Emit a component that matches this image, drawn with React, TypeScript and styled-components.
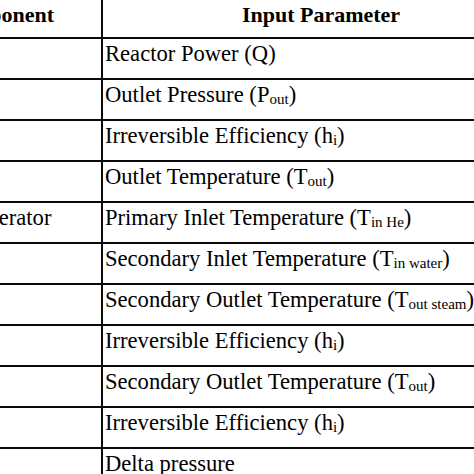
import styled, { createGlobalStyle } from 'styled-components';

const GlobalStyle = createGlobalStyle`
  html, body {
    margin: 0;
    padding: 0;
    background: #ffffff;
    overflow: hidden;
  }
  body {
    width: 474px;
    height: 474px;
    font-family: 'Liberation Serif', 'Times New Roman', serif;
    color: #000000;
  }
`;

const Table = styled.table`
  margin: -4px 0 0 -105px;
  border-collapse: separate;
  border-spacing: 0;
  border-top: 2px solid #0a0a0a;
  border-left: 2px solid #0a0a0a;
  table-layout: fixed;
  width: 646px;
  font-size: 22.6px;
  line-height: 25px;
`;

const HeadCell = styled.th<{ $wide?: boolean }>`
  box-sizing: border-box;
  width: ${({ $wide }) => ($wide ? '438px' : '206px')};
  height: 41px;
  padding: 4px 2px 0;
  vertical-align: top;
  text-align: center;
  font-size: 22px;
  font-weight: bold;
  border-right: 2px solid #0a0a0a;
  border-bottom: 2px solid #0a0a0a;
  white-space: nowrap;
`;

const Cell = styled.td`
  box-sizing: border-box;
  height: 41px;
  padding: 2px 2px 0;
  vertical-align: top;
  text-align: left;
  border-right: 2px solid #0a0a0a;
  border-bottom: 2px solid #0a0a0a;
  white-space: nowrap;
  overflow: hidden;
`;

const Sub = styled.sub`
  font-size: 15px;
  line-height: 0;
  vertical-align: -2px;
`;

type Row = {
  component?: string;
  label: string;
  symbol?: string;
  sub?: string;
};

const rows: Row[] = [
  { label: 'Reactor Power', symbol: 'Q' },
  { label: 'Outlet Pressure', symbol: 'P', sub: 'out' },
  { label: 'Irreversible Efficiency', symbol: 'h', sub: 'i' },
  { label: 'Outlet Temperature', symbol: 'T', sub: 'out' },
  {
    component: 'Steam Generator',
    label: 'Primary Inlet Temperature',
    symbol: 'T',
    sub: 'in He',
  },
  { label: 'Secondary Inlet Temperature', symbol: 'T', sub: 'in water' },
  { label: 'Secondary Outlet Temperature', symbol: 'T', sub: 'out steam' },
  { label: 'Irreversible Efficiency', symbol: 'h', sub: 'i' },
  { label: 'Secondary Outlet Temperature', symbol: 'T', sub: 'out' },
  { label: 'Irreversible Efficiency', symbol: 'h', sub: 'i' },
  { label: 'Delta pressure' },
];

const App = () => {
  return (
    <>
      <GlobalStyle />
      <Table>
        <thead>
          <tr>
            <HeadCell>Component</HeadCell>
            <HeadCell $wide>Input Parameter</HeadCell>
          </tr>
        </thead>
        <tbody>
          {rows.map((row, i) => (
            <tr key={i}>
              <Cell>{row.component}</Cell>
              <Cell>
                {row.label}
                {row.symbol && (
                  <>
                    {' ('}
                    {row.symbol}
                    {row.sub && <Sub>{row.sub}</Sub>}
                    {')'}
                  </>
                )}
              </Cell>
            </tr>
          ))}
        </tbody>
      </Table>
    </>
  );
};

export default App;
